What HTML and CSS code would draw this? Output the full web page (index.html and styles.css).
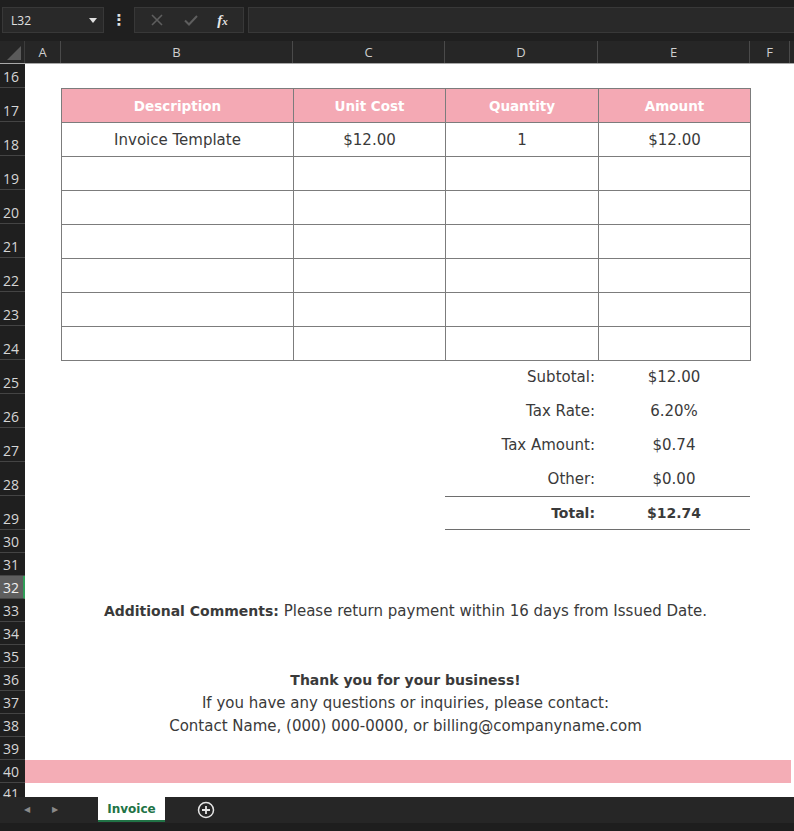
FILE: index.html
```html
<!DOCTYPE html>
<html>
<head>
<meta charset="utf-8">
<link rel="stylesheet" href="styles.css">
</head>
<body>
<div class="app">
  <div class="toolbar">
    <div class="namebox"><span class="nb-text">L32</span><span class="nb-arrow"></span></div>
    <div class="dots">⋮</div>
    <div class="fbtns">
      <svg class="ico" width="14" height="14" viewBox="0 0 14 14"><path d="M2 2 L12 12 M12 2 L2 12" stroke="#5e5e5e" stroke-width="1.6" fill="none"/></svg>
      <svg class="ico" width="16" height="14" viewBox="0 0 16 14"><path d="M2 7.5 L6 11.5 L14 3" stroke="#5e5e5e" stroke-width="2" fill="none"/></svg>
      <span class="fx"><i>f</i><i class="x">x</i></span>
    </div>
    <div class="formula"></div>
  </div>
  <div class="colheads">
    <div class="corner"><span class="tri"></span></div>
    <div class="ch ch-a">A</div>
    <div class="ch ch-b">B</div>
    <div class="ch ch-c">C</div>
    <div class="ch ch-d">D</div>
    <div class="ch ch-e">E</div>
    <div class="ch ch-f">F</div>
    <div class="ch ch-rest"></div>
  </div>
  <div class="sheet">
    <div class="rn" style="grid-row:1">16</div>
    <div class="rn" style="grid-row:2">17</div>
    <div class="rn" style="grid-row:3">18</div>
    <div class="rn" style="grid-row:4">19</div>
    <div class="rn" style="grid-row:5">20</div>
    <div class="rn" style="grid-row:6">21</div>
    <div class="rn" style="grid-row:7">22</div>
    <div class="rn" style="grid-row:8">23</div>
    <div class="rn" style="grid-row:9">24</div>
    <div class="rn" style="grid-row:10">25</div>
    <div class="rn" style="grid-row:11">26</div>
    <div class="rn" style="grid-row:12">27</div>
    <div class="rn" style="grid-row:13">28</div>
    <div class="rn" style="grid-row:14">29</div>
    <div class="rn" style="grid-row:15">30</div>
    <div class="rn" style="grid-row:16">31</div>
    <div class="rn sel" style="grid-row:17">32</div>
    <div class="rn" style="grid-row:18">33</div>
    <div class="rn" style="grid-row:19">34</div>
    <div class="rn" style="grid-row:20">35</div>
    <div class="rn" style="grid-row:21">36</div>
    <div class="rn" style="grid-row:22">37</div>
    <div class="rn" style="grid-row:23">38</div>
    <div class="rn" style="grid-row:24">39</div>
    <div class="rn" style="grid-row:25">40</div>
    <div class="rn last" style="grid-row:26">41</div>

    <table class="items">
      <colgroup><col class="w-b"><col class="w-c"><col class="w-d"><col class="w-e"></colgroup>
      <tr class="head"><th>Description</th><th>Unit Cost</th><th>Quantity</th><th>Amount</th></tr>
      <tr><td>Invoice Template</td><td>$12.00</td><td>1</td><td>$12.00</td></tr>
      <tr><td></td><td></td><td></td><td></td></tr>
      <tr><td></td><td></td><td></td><td></td></tr>
      <tr><td></td><td></td><td></td><td></td></tr>
      <tr><td></td><td></td><td></td><td></td></tr>
      <tr><td></td><td></td><td></td><td></td></tr>
      <tr><td></td><td></td><td></td><td></td></tr>
    </table>

    <div class="lbl r25">Subtotal:</div><div class="val r25">$12.00</div>
    <div class="lbl r26">Tax Rate:</div><div class="val r26">6.20%</div>
    <div class="lbl r27">Tax Amount:</div><div class="val r27">$0.74</div>
    <div class="lbl r28">Other:</div><div class="val r28">$0.00</div>
    <div class="totalrow"><div class="lbl b">Total:</div><div class="val b">$12.74</div></div>

    <div class="comments"><span><b>Additional Comments:</b> Please return payment within 16 days from Issued Date.</span></div>
    <div class="center r36"><b>Thank you for your business!</b></div>
    <div class="center r37">If you have any questions or inquiries, please contact:</div>
    <div class="center r38">Contact Name, (000) 000-0000, or billing@companyname.com</div>
    <div class="band"></div>
  </div>
  <div class="tabbar">
    <span class="arrow">&#9664;</span>
    <span class="arrow">&#9654;</span>
    <div class="tab">Invoice</div>
    <svg class="plus" width="18" height="18" viewBox="0 0 18 18"><circle cx="9" cy="9" r="7.5" stroke="#e6e6e6" stroke-width="1.5" fill="none"/><path d="M9 5 V13 M5 9 H13" stroke="#e6e6e6" stroke-width="1.8"/></svg>
  </div>
</div>
</body>
</html>
```
FILE: styles.css
```css
* { box-sizing: border-box; }
html, body { margin: 0; padding: 0; }
body { width: 794px; height: 831px; overflow: hidden; background: #1f1f1f; font-family: "DejaVu Sans", sans-serif; }
.app { width: 794px; height: 831px; display: flex; flex-direction: column; }

.toolbar { height: 41px; display: flex; align-items: flex-start; padding-top: 7px; background: #1f1f1f; }
.namebox { width: 102px; height: 26px; margin-left: 2px; background: #292929; border: 1px solid #383838; display: flex; align-items: center; justify-content: space-between; padding: 0 6px 0 8px; }
.nb-text { color: #e0e0e0; font-family: "Open Sans", sans-serif; font-size: 12px; }
.nb-arrow { width: 0; height: 0; border-left: 4px solid transparent; border-right: 4px solid transparent; border-top: 5px solid #e0e0e0; }
.dots { width: 30px; text-align: center; color: #e0e0e0; font-size: 15px; line-height: 26px; font-weight: bold; }
.fbtns { width: 110px; height: 26px; background: #292929; border: 1px solid #383838; display: flex; align-items: center; justify-content: space-around; padding: 0 6px; }
.fx { color: #e6e6e6; font-family: "Liberation Serif", serif; font-size: 15px; font-weight: bold; }
.fx .x { font-size: 11px; }
.formula { flex: 1; height: 26px; margin-left: 4px; background: #292929; border: 1px solid #383838; border-right: none; }

.colheads { height: 23px; display: flex; background: #262626; border-bottom: 1px solid #a8a8a8; font-family: "Open Sans", sans-serif; font-size: 13px; color: #cfcfcf; }
.corner { width: 25px; position: relative; border-right: 1px solid #3c3c3c; }
.tri { position: absolute; right: 3px; bottom: 3px; width: 0; height: 0; border-left: 14px solid transparent; border-bottom: 14px solid #5a5a5a; }
.ch { display: flex; align-items: center; justify-content: center; border-right: 1px solid #4a4a4a; }
.ch-a { width: 36px; }
.ch-b { width: 232px; }
.ch-c { width: 152px; }
.ch-d { width: 153px; }
.ch-e { width: 152px; }
.ch-f { width: 40px; }
.ch-rest { flex: 1; border-right: none; }

.sheet { height: 733px; overflow: hidden; background: #fff; display: grid;
  grid-template-columns: 25px 36px 232px 152px 153px 152px 40px 1fr;
  grid-template-rows: 24px repeat(13, 34px) repeat(12, 23px);
  color: #3a3a3a; font-size: 15px; }
.rn { grid-column: 1; background: #1f1f1f; color: #d6d6d6; border-bottom: 1px solid #444; font-family: "Open Sans", sans-serif; font-size: 14px; display: flex; align-items: flex-end; padding: 0 0 0 3px; line-height: 21px; }
.rn.last { align-items: flex-start; line-height: 22px; }
.rn.sel { background: #5e5e5e; color: #f0f0f0; border-right: 2px solid #2f9e57; }

.items { grid-column: 3 / 7; grid-row: 2 / 10; border-collapse: collapse; table-layout: fixed; width: 689px; height: 272px; margin: 0; }
.w-b { width: 232px; } .w-c { width: 152px; } .w-d { width: 153px; } .w-e { width: 152px; }
.items th, .items td { border: 1px solid #7c7c7c; height: 34px; padding: 0; text-align: center; vertical-align: middle; font-weight: normal; }
.items th { background: #f4a9b4; color: #fff; font-weight: bold; font-size: 13.5px; }

.lbl { grid-column: 5; text-align: right; padding-right: 3px; display: flex; align-items: center; justify-content: flex-end; }
.val { grid-column: 6; display: flex; align-items: center; justify-content: center; }
.r25 { grid-row: 10; } .r26 { grid-row: 11; } .r27 { grid-row: 12; } .r28 { grid-row: 13; }
.totalrow { grid-column: 5 / 7; grid-row: 14; display: grid; grid-template-columns: 153px 152px; border-top: 1px solid #6e6e6e; border-bottom: 1px solid #6e6e6e; }
.totalrow .lbl, .totalrow .val { grid-column: auto; }
.b { font-weight: bold; font-size: 14px; }

.comments { grid-column: 3 / 7; grid-row: 18; display: flex; align-items: center; justify-content: center; white-space: nowrap; }
.comments b, .center b { font-size: 14px; }
.center { grid-column: 3 / 7; display: flex; align-items: center; justify-content: center; white-space: nowrap; }
.r36 { grid-row: 21; } .r37 { grid-row: 22; } .r38 { grid-row: 23; }
.band { grid-column: 2 / 9; grid-row: 25; background: #f4adb6; margin-right: 3px; }

.tabbar { height: 34px; background: #262626; display: flex; align-items: flex-start; border-bottom: 8px solid #1e1e1e; position: relative; }
.arrow { color: #8a8a8a; font-size: 8px; line-height: 26px; width: 28px; text-align: center; }
.arrow:first-child { margin-left: 13px; }
.tab { margin-left: 29px; width: 67px; height: 25px; background: #fff; color: #217346; font-family: "DejaVu Sans", sans-serif; font-weight: bold; font-size: 12px; display: flex; align-items: center; justify-content: center; border-bottom: 2px solid #217346; }
.plus { margin-left: 32px; margin-top: 4px; }
```
